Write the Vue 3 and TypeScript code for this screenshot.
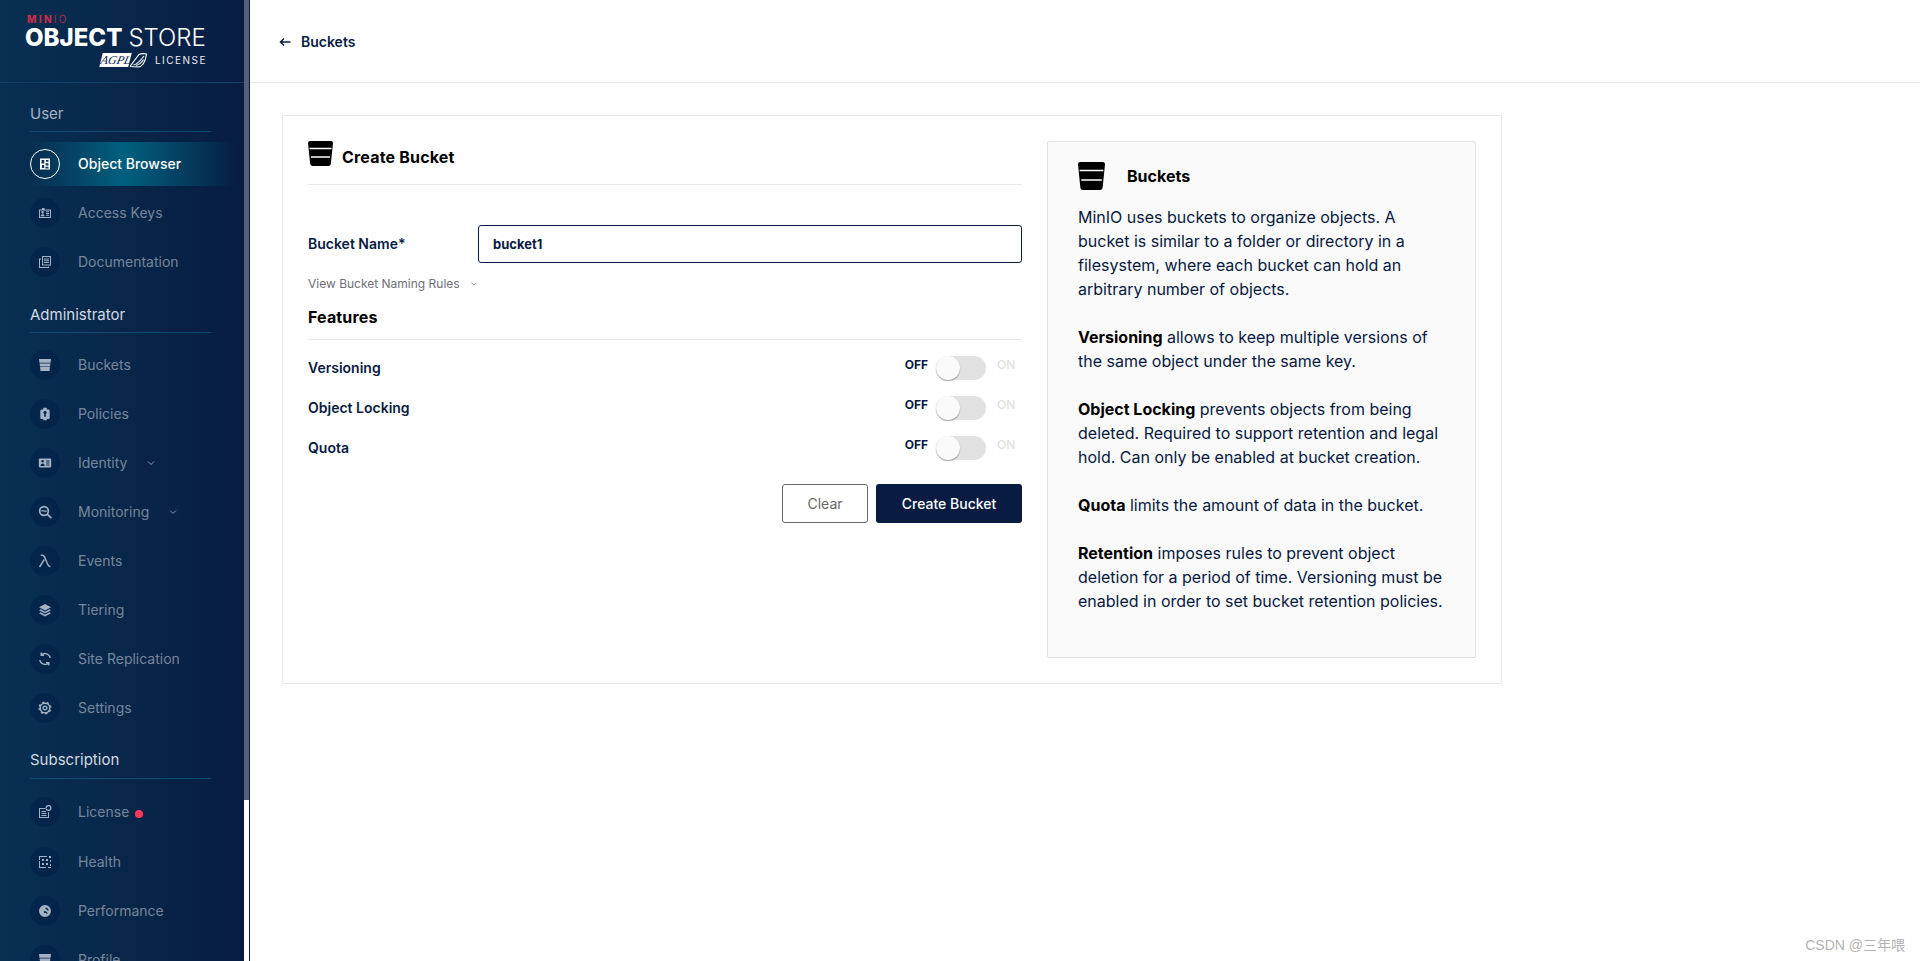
<script setup lang="ts">
interface Icon { fill?: string; stroke?: string; thin?: string }
interface Item { label: string; icon: Icon; active?: boolean; chevron?: boolean; dot?: boolean }
interface Section { title: string; items: Item[] }

const circle = (r: number): string => `M${7 - r} 7a${r} ${r} 0 1 0 ${2 * r} 0a${r} ${r} 0 1 0 ${-2 * r} 0z`

const icons: Record<string, Icon> = {
  browser: { fill: 'M2 1.500h10v11H2zM3.500 3v3.500h2.800V3zM8 3v1.800h2.500V3zM7.600 6.200v2.300h2.900V6.200zM4 8v3h2.200V8zM7.400 9.800v1.600h3.100V9.800z' },
  keys: { fill: 'M1 3.500h3V2h2.500v1.500H13V12H1zM2 4.500v6.500h10V4.500zM4.600 5a1.300 1.300 0 1 1 0 2.600 1.300 1.300 0 0 1 0-2.600zM2.700 10.300c0-1.500.9-2.100 1.900-2.100s1.900.6 1.900 2.100zM8 5.200h3v1H8zM8 7h3v1H8zM8 8.800h3v1H8z' },
  docs: { fill: 'M4 1h9v9.500H4zM5 2v7.500h7V2zM6 3.500h5v1H6zM6 5.200h5v1H6zM6 7h5v1H6zM1 3.500h2v1H2V12h8v-.5h1V13H1z' },
  buckets: { fill: 'M1 1h12l-.4 3.700H1.400zM1.600 5.400h10.800l-.4 3H2zM2.100 9.100h9.800L11.500 13h-9z' },
  policies: { fill: 'M5.200.8h3.600v1.600h1.300c1 0 1.600.6 1.600 1.600v6.400c0 1-.6 1.600-1.600 1.600H8.800v1.200H5.200V12H3.900c-1 0-1.600-.6-1.600-1.600V4c0-1 .6-1.600 1.600-1.600H5.200zM7 4a1.600 1.600 0 0 0-.8 3v2.800h1.600V7A1.600 1.600 0 0 0 7 4z' },
  identity: { fill: 'M2 2.500h10c.7 0 1.200.5 1.200 1.200v6.600c0 .7-.5 1.200-1.200 1.200H2c-.7 0-1.200-.5-1.200-1.200V3.700c0-.7.5-1.200 1.200-1.200zM4.600 4a1.300 1.300 0 1 0 0 2.600 1.300 1.300 0 0 0 0-2.600zM2.500 10h4.200c0-1.600-.9-2.500-2.100-2.500S2.500 8.400 2.500 10zM8.200 4.500v1h3.300v-1zM8.200 6.500v1h3.300v-1zM8.200 8.500v1h3.300v-1z' },
  monitoring: { fill: 'M6 .8a5.200 5.200 0 1 1 0 10.400A5.200 5.200 0 0 1 6 .8zM6 2.500a3.500 3.500 0 1 0 0 7 3.500 3.500 0 0 0 0-7zM9.200 10.300l1.200-1.200 3 3c.4.400.4.900 0 1.200-.3.400-.8.400-1.200 0z', thin: 'M3 6h1.300l1-2 1.400 4 1-2H9' },
  events: { stroke: 'M1.500 13 6.300 5.500M2.800 1.200h1.500c1 0 1.700.5 2.100 1.400L10 11c.4.900 1.100 1.500 2.400 1.500' },
  tiering: { fill: 'M7 1l6 3.200L7 7.400 1 4.200zM2.600 6.300 7 8.700l4.400-2.400L13 7.200 7 10.400 1 7.200zM2.600 9.300 7 11.700l4.400-2.400L13 10.200 7 13.400 1 10.200z' },
  replication: { stroke: 'M12.200 6A5.300 5.300 0 0 0 3.300 3.100M1.800 8A5.300 5.300 0 0 0 10.700 10.900M3.200 .6V3.400H6M10.800 13.400V10.600H8' },
  settings: { stroke: `${circle(4.8)}${circle(1.9)}`, thin: circle(5.9) },
  license: { fill: 'M1 3h7.500v1H2v8h8V7.200h1V13H1zM3.500 6h4.500v1H3.500zM3.500 8h5v1h-5zM3.500 10h5v1h-5zM10.500 0a3 3 0 1 1 0 6 3 3 0 0 1 0-6zM10.500 1.200a1.800 1.800 0 1 0 0 3.600 1.800 1.800 0 0 0 0-3.600z' },
  health: { fill: 'M1 1h8v1H2v3H1zM1 6h1v6h6v1H1zM11 1h2v2h-2zM12 5h1v2h-1zM12 9h1v2h-1zM10 12h3v1h-3zM4 4h2v2H4zM8 4h2v2H8zM4 8h2v2H4zM8 8h2v2H8z' },
  performance: { fill: 'M7 1a6 6 0 1 1 0 12A6 6 0 0 1 7 1zM7.500 3.500v1.500c.9.100 1.600.8 1.700 1.500h1.500c-.2-1.600-1.500-2.900-3.200-3zM6.500 7a1 1 0 1 0 1 1.700l1.500 1.300.8-.7-1.500-1.500A1.700 1.700 0 0 0 6.500 7z' },
}

const sections: Section[] = [
  { title: 'User', items: [
    { label: 'Object Browser', icon: icons.browser, active: true },
    { label: 'Access Keys', icon: icons.keys },
    { label: 'Documentation', icon: icons.docs },
  ] },
  { title: 'Administrator', items: [
    { label: 'Buckets', icon: icons.buckets },
    { label: 'Policies', icon: icons.policies },
    { label: 'Identity', icon: icons.identity, chevron: true },
    { label: 'Monitoring', icon: icons.monitoring, chevron: true },
    { label: 'Events', icon: icons.events },
    { label: 'Tiering', icon: icons.tiering },
    { label: 'Site Replication', icon: icons.replication },
    { label: 'Settings', icon: icons.settings },
  ] },
  { title: 'Subscription', items: [
    { label: 'License', icon: icons.license, dot: true },
    { label: 'Health', icon: icons.health },
    { label: 'Performance', icon: icons.performance },
    { label: 'Profile', icon: icons.buckets },
  ] },
]

const features: string[] = ['Versioning', 'Object Locking', 'Quota']
</script>

<template>
  <div class="page">
    <aside class="sidebar">
      <div class="side-col">
        <div class="logo">
          <div class="logo-minio"><b>MIN</b><span>IO</span></div>
          <div class="logo-name"><b>OBJECT</b><span>STORE</span></div>
          <div class="logo-license">
            <span class="agpl"><i>AGPL</i>
              <svg class="wing" viewBox="0 0 17 15" aria-hidden="true">
                <path d="M0 13.500 9 1.500C11 .5 14 .5 16.500 1 15.500 8 13 13.500 8 14Z" fill="none" stroke="#fff" stroke-width="1.100" />
                <path d="M3.500 12C8 11 11 7 14 3M6 12.500C9.500 11.500 12 9 13.500 6.500" fill="none" stroke="#fff" stroke-width="1.100" />
              </svg>
            </span>
            <span class="license-word">LICENSE</span>
          </div>
        </div>
        <nav class="nav">
          <section v-for="s in sections" :key="s.title" class="nav-section">
            <div class="nav-title">{{ s.title }}</div>
            <a v-for="it in s.items" :key="it.label" class="nav-item" :class="{ active: it.active, licensed: it.dot }">
              <span class="nav-icon">
                <svg viewBox="0 0 14 14" width="14" height="14" aria-hidden="true">
                  <path v-if="it.icon.fill" :d="it.icon.fill" fill="currentColor" fill-rule="evenodd" />
                  <path v-if="it.icon.stroke" :d="it.icon.stroke" fill="none" stroke="currentColor" stroke-width="1.400" />
                  <path v-if="it.icon.thin" :d="it.icon.thin" fill="none" stroke="currentColor" stroke-width="1.200" stroke-dasharray="2.200 2.430" />
                </svg>
              </span>
              <span class="nav-label">{{ it.label }}</span>
              <span v-if="it.chevron" class="nav-chev">
                <svg viewBox="0 0 10 10" width="10" height="10" aria-hidden="true"><path d="M2 3.500 5 6.500 8 3.500" fill="none" stroke="currentColor" stroke-width="1" /></svg>
              </span>
              <span v-if="it.dot" class="nav-dot"></span>
            </a>
          </section>
        </nav>
      </div>
      <div class="scroll-track"><div class="scroll-thumb"></div></div>
    </aside>

    <main class="main">
      <header class="topbar">
        <svg class="back" viewBox="0 0 12 10" width="12" height="10" aria-hidden="true"><path d="M11.500 5H2M5 1.500 1.500 5 5 8.500" fill="none" stroke="#081c42" stroke-width="1.500" /></svg>
        <span class="back-label">Buckets</span>
      </header>

      <div class="content">
        <div class="card">
          <div class="form-col">
            <div class="form-title">
              <svg class="bucket" viewBox="0 0 25 25" width="25" height="25" aria-hidden="true">
                <path d="M2 0H23Q25 0 25 2L22.800 23Q22.400 25 20.400 25H4.600Q2.600 25 2.200 23L0 2Q0 0 2 0Z" fill="#000" />
                <path d="M1.500 7.500H23.500M3 16H22" stroke="#fff" stroke-width="1.500" />
              </svg>
              <h1>Create Bucket</h1>
            </div>

            <div class="field">
              <label for="bucket-name">Bucket Name*</label>
              <input id="bucket-name" value="bucket1" />
            </div>

            <div class="rules">
              <span>View Bucket Naming Rules</span>
              <svg viewBox="0 0 10 10" width="8" height="8" aria-hidden="true"><path d="M2 3.500 5 6.500 8 3.500" fill="none" stroke="#5a6a80" stroke-width="1" /></svg>
            </div>

            <h2 class="features-title">Features</h2>

            <div class="features">
              <div v-for="f in features" :key="f" class="feature">
                <span class="feature-name">{{ f }}</span>
                <div class="toggle">
                  <span class="off">OFF</span>
                  <span class="track"><span class="knob"></span></span>
                  <span class="on">ON</span>
                </div>
              </div>
            </div>

            <div class="actions">
              <button class="btn ghost">Clear</button>
              <button class="btn primary">Create Bucket</button>
            </div>
          </div>

          <aside class="help">
            <div class="help-head">
              <svg viewBox="0 0 25 25" width="27" height="28" preserveAspectRatio="none" aria-hidden="true">
                <path d="M2 0H23Q25 0 25 2L22.800 23Q22.400 25 20.400 25H4.600Q2.600 25 2.200 23L0 2Q0 0 2 0Z" fill="#000" />
                <path d="M1.500 7.500H23.500M3 16H22" stroke="#fff" stroke-width="1.300" />
              </svg>
              <h3>Buckets</h3>
            </div>
            <p>MinIO uses buckets to organize objects. A bucket is similar to a folder or directory in a filesystem, where each bucket can hold an arbitrary number of objects.</p>
            <p><b>Versioning</b> allows to keep multiple versions of the same object under the same key.</p>
            <p><b>Object Locking</b> prevents objects from being deleted. Required to support retention and legal hold. Can only be enabled at bucket creation.</p>
            <p><b>Quota</b> limits the amount of data in the bucket.</p>
            <p><b>Retention</b> imposes rules to prevent object deletion for a period of time. Versioning must be enabled in order to set bucket retention policies.</p>
          </aside>
        </div>
      </div>
    </main>

    <div class="watermark">CSDN @三年喂</div>
  </div>
</template>

<style>
html, body { margin: 0; background: #fff; overflow: hidden; }
</style>

<style scoped>
.page {
  position: relative;
  display: flex;
  height: 961px;
  overflow: hidden;
  font-family: Inter, "Noto Sans CJK SC", sans-serif;
  color: #081c42;
}
.sidebar {
  display: flex;
  flex: 0 0 250px;
  height: 961px;
  box-sizing: border-box;
  border-right: 1px solid #081c42;
  overflow: hidden;
}
.side-col {
  flex: 0 0 244px;
  width: 244px;
  height: 961px;
  overflow: hidden;
  background: linear-gradient(90deg, #073052 0%, #081c42 100%);
}
.scroll-track { flex: 0 0 5px; background: #fff; }
.scroll-thumb { height: 800px; background: #565f79; }

.logo {
  box-sizing: border-box;
  height: 83px;
  padding: 14px 0 0 25px;
  border-bottom: 1px solid #0f3f68;
  color: #fff;
}
.logo-minio {
  font-size: 10px;
  line-height: 10px;
  letter-spacing: 2.300px;
  color: #c72c48;
  padding-left: 2px;
}
.logo-minio b { font-weight: 800; }
.logo-minio span { font-weight: 300; }
.logo-name {
  display: flex;
  gap: 6px;
  font-size: 24px;
  line-height: 27px;
}
.logo-name b { font-weight: 800; }
.logo-name span { font-weight: 300; }
.logo-license {
  display: flex;
  align-items: center;
  justify-content: flex-end;
  gap: 8px;
  width: 182px;
  height: 16px;
  margin-top: 1px;
}
.agpl {
  display: flex;
  align-items: center;
  height: 15px;
}
.agpl i {
  display: block;
  width: 29px;
  height: 14px;
  background: #fff;
  color: #0a2450;
  font-family: "Liberation Serif", serif;
  font-size: 12px;
  line-height: 14px;
  font-weight: 400;
  text-align: center;
  transform: skewX(-14deg);
}
.wing { width: 17px; height: 15px; }
.license-word {
  font-size: 10px;
  line-height: 14px;
  letter-spacing: 1.500px;
  color: #e8ecf1;
}

.nav { padding: 21px 0 0 30px; }
.nav-section + .nav-section { margin-top: 21px; }
.nav-section:last-child { margin-top: 20px; }
.nav-title {
  width: 181px;
  padding-bottom: 7px;
  margin-bottom: 10px;
  border-bottom: 1px solid #0f4a73;
  font-size: 15px;
  line-height: 20px;
  color: #d3dae2;
}
.nav-section:first-child .nav-title { color: #a3b2c2; }
.nav-section:last-child .nav-title { padding-bottom: 8px; margin-bottom: 11px; }
.nav-item {
  display: flex;
  align-items: center;
  width: 205px;
  height: 44px;
  margin-bottom: 5px;
  color: rgba(255, 255, 255, .45);
  font-size: 14px;
}
.nav-item.licensed { margin-bottom: 6px; }
.nav-icon {
  display: flex;
  flex: 0 0 30px;
  align-items: center;
  justify-content: center;
  width: 30px;
  height: 30px;
  box-sizing: border-box;
  border-radius: 50%;
  background: rgba(0, 28, 72, .45);
  color: #a4b2c4;
}
.nav-label { margin-left: 18px; line-height: 20px; }
.nav-item.active {
  background: linear-gradient(90deg, rgba(0, 96, 126, 0) 0%, #00607e 45%, rgba(0, 96, 126, 0) 100%);
  color: #fff;
  font-weight: 500;
}
.nav-item.active .nav-icon {
  background: transparent;
  border: 1px solid #fff;
  color: #fff;
}
.nav-chev {
  display: flex;
  align-items: center;
  justify-content: center;
  width: 15px;
  height: 15px;
  margin-left: 16px;
  border-radius: 2px;
  background: #0a2148;
  color: #8a9ab0;
}
.nav-dot {
  width: 8px;
  height: 8px;
  margin: 3px 0 0 6px;
  border-radius: 50%;
  background: #ff3958;
}

.main { flex: 1; min-width: 0; }
.topbar {
  display: flex;
  align-items: center;
  box-sizing: border-box;
  height: 83px;
  padding: 1px 0 0 29px;
  border-bottom: 1px solid #eaeaea;
}
.back { margin-right: 10px; }
.back-label { font-size: 14px; font-weight: 600; color: #081c42; }
.content { padding: 32px; }
.card {
  display: flex;
  gap: 25px;
  box-sizing: border-box;
  width: 1220px;
  padding: 25px;
  border: 1px solid #eaeaea;
}
.form-col { flex: 0 0 714px; }
.form-title {
  display: flex;
  align-items: flex-end;
  gap: 9px;
  padding-bottom: 18px;
  border-bottom: 1px solid #eaeaea;
}
.form-title h1 {
  margin: 0 0 -1px;
  font-size: 16px;
  line-height: 20px;
  font-weight: 700;
  letter-spacing: .18px;
  color: #000;
}
.field {
  display: flex;
  align-items: center;
  margin-top: 40px;
}
.field label {
  flex: 0 0 170px;
  padding-bottom: 1px;
  font-size: 14px;
  font-weight: 600;
  color: #081c42;
}
.field input {
  flex: 1;
  min-width: 0;
  box-sizing: border-box;
  height: 38px;
  padding: 0 14px;
  border: 1px solid #081c42;
  border-radius: 3px;
  outline: 0;
  font-family: inherit;
  font-size: 13px;
  font-weight: 700;
  color: #081c42;
}
.rules {
  display: flex;
  align-items: center;
  gap: 10px;
  margin-top: 13px;
  font-size: 12px;
  line-height: 15px;
  color: #6f6f77;
}
.features-title {
  margin: 16px 0 0;
  padding-bottom: 12px;
  border-bottom: 1px solid #eaeaea;
  font-size: 16px;
  line-height: 20px;
  font-weight: 700;
  letter-spacing: .15px;
  color: #000;
}
.features {
  display: flex;
  flex-direction: column;
  gap: 16px;
  margin-top: 16px;
}
.feature {
  display: flex;
  align-items: center;
  justify-content: space-between;
  height: 24px;
}
.feature-name { padding-bottom: 2px; font-size: 14px; font-weight: 600; color: #081c42; }
.toggle {
  display: flex;
  align-items: flex-start;
  padding-right: 8px;
  font-size: 12px;
  line-height: 18px;
  font-weight: 700;
}
.off { color: #081c42; margin-right: 8px; }
.on { color: #e2e2e2; margin-left: 11px; width: 17px; font-weight: 500; white-space: nowrap; }
.track {
  display: block;
  width: 50px;
  height: 24px;
  border-radius: 12px;
  background: #e2e2e2;
}
.knob {
  display: block;
  width: 24px;
  height: 24px;
  border-radius: 50%;
  background: #fafafa;
  box-shadow: 0 1px 1px rgba(0, 0, 0, .4);
}
.actions {
  display: flex;
  justify-content: flex-end;
  gap: 8px;
  margin-top: 24px;
}
.btn {
  height: 39px;
  border-radius: 3px;
  font-family: inherit;
  font-size: 14px;
  padding: 0;
}
.btn.ghost {
  width: 86px;
  background: #fff;
  border: 1px solid #696969;
  color: #696969;
}
.btn.primary {
  width: 146px;
  border: 0;
  background: #081c42;
  color: #fff;
  font-weight: 500;
}
.help {
  flex: 0 0 429px;
  box-sizing: border-box;
  height: 517px;
  padding: 20px 25px 0 30px;
  border: 1px solid #e2e2e2;
  border-radius: 2px;
  background: #fbfafa;
  color: #07193e;
  font-size: 16px;
  line-height: 24px;
}
.help-head {
  display: flex;
  align-items: center;
  gap: 22px;
  height: 28px;
  margin-bottom: 15px;
}
.help-head h3 {
  margin: 0;
  font-size: 16px;
  font-weight: 700;
  color: #000;
}
.help p { margin: 0 0 24px; }
.help b { font-weight: 700; color: #000; }

.watermark {
  position: absolute;
  right: 15px;
  bottom: 6px;
  font-family: "Liberation Sans", "Noto Sans CJK SC", sans-serif;
  font-size: 14px;
  line-height: 20px;
  color: #b3b3b3;
}
</style>
